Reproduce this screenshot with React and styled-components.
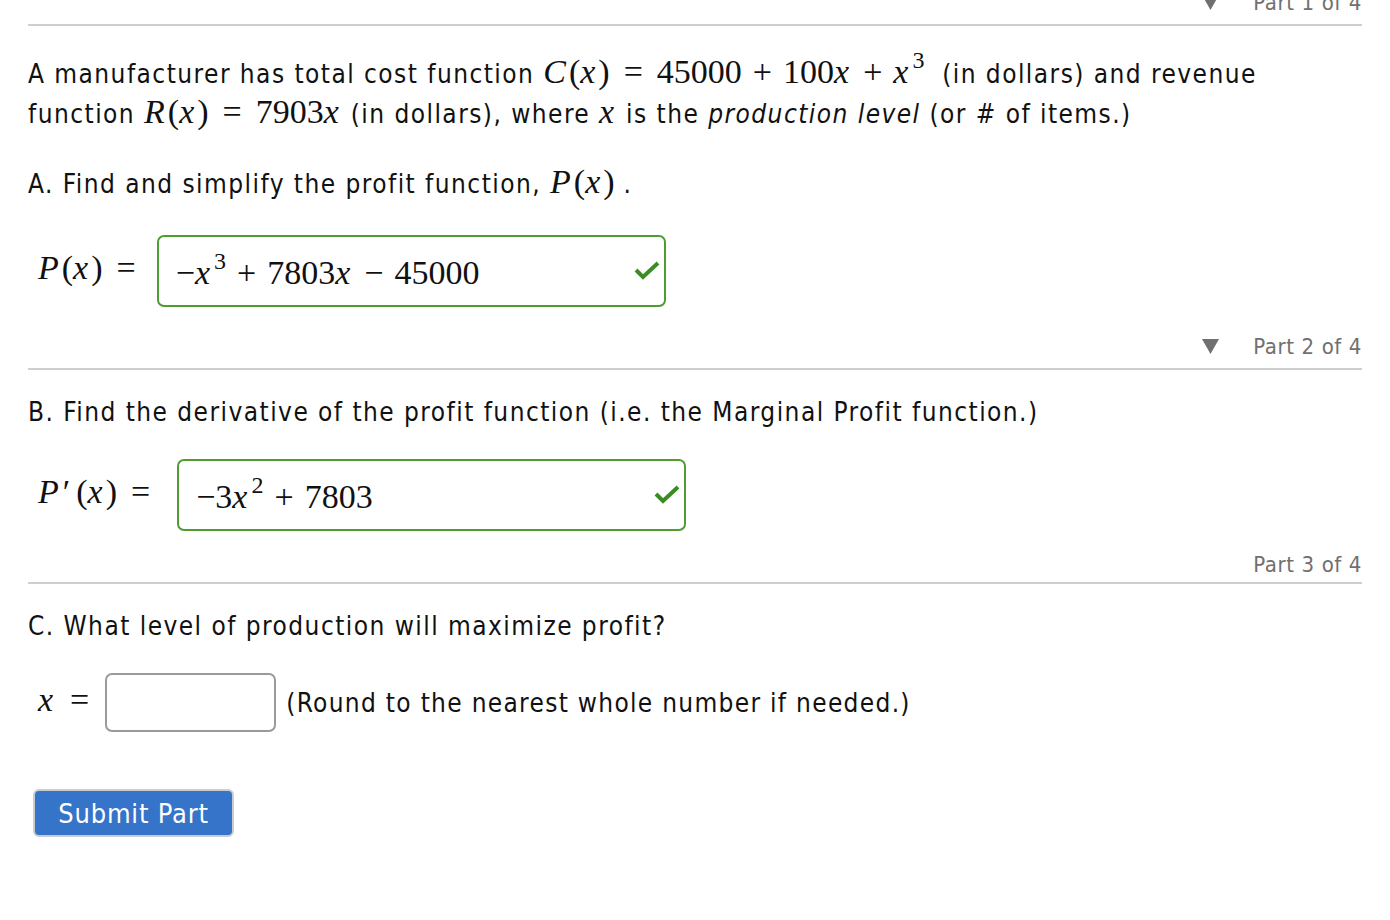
import React from "react";
import styled, { createGlobalStyle } from "styled-components";

const GlobalStyle = createGlobalStyle`
  body {
    margin: 0;
    background: #fff;
    font-family: "DejaVu Sans Condensed", "Open Sans", sans-serif;
    color: #111;
  }
`;

const Page = styled.div`
  padding: 0 28px 80px 28px;
  margin-top: -20px;
`;

const PartHeader = styled.div`
  display: flex;
  justify-content: flex-end;
  align-items: center;
  gap: 34px;
  height: ${({ $tight }) => ($tight ? "36px" : "44px")};
  margin-top: ${({ $mt }) => $mt || "0"};
  border-bottom: 2px solid #cfcfcf;
  color: #707070;
  font-size: 22px;
  letter-spacing: 0.6px;
`;

const Arrow = () => (
  <svg width="17" height="15" viewBox="0 0 17 15">
    <polygon points="0,0 17,0 8.5,15" fill="#707070" />
  </svg>
);

const Para = styled.p`
  margin: ${({ $m }) => $m || "0"};
  font-size: 26px;
  line-height: 40px;
  letter-spacing: 1.45px;
  white-space: nowrap;
`;

const M = styled.span`
  font-family: "Liberation Serif", "DejaVu Serif", serif;
  font-size: 34px;
  line-height: 0;
  letter-spacing: 0;
  font-style: ${({ $i }) => ($i ? "italic" : "normal")};
  margin-right: ${({ $i }) => ($i ? "3px" : "0")};
`;

const Prime = styled(M)`
  margin: 0 6px 0 1px;
`;

const Op = styled.span`
  font-family: "Liberation Serif", "DejaVu Serif", serif;
  font-size: 34px;
  line-height: 0;
  letter-spacing: 0;
  margin: 0 ${({ $rel }) => ($rel ? "14px" : "11px")};
`;

const Sup = styled.sup`
  font-family: "Liberation Serif", "DejaVu Serif", serif;
  font-size: 24px;
  line-height: 0;
  letter-spacing: 0;
  vertical-align: 0;
  position: relative;
  top: -15px;
  margin-left: 1px;
`;

const AnswerRow = styled.div`
  display: flex;
  align-items: center;
  padding-left: 10px;
  margin: ${({ $m }) => $m || "0"};
`;

const Label = styled.div`
  white-space: nowrap;
  line-height: 40px;
  padding-top: 6px;
  margin-right: ${({ $gap }) => $gap || "10px"};
`;

const AnswerBox = styled.div`
  display: flex;
  align-items: center;
  justify-content: space-between;
  box-sizing: border-box;
  width: ${({ $w }) => $w};
  height: ${({ $h }) => $h || "72px"};
  border: 2px solid ${({ $ok }) => ($ok ? "#4f9c2f" : "#9a9a9a")};
  border-radius: 7px;
  padding: 0 3px 0 17px;
  white-space: nowrap;
  line-height: 40px;
`;

const BoxMath = styled.span`
  padding-top: 16px;
`;

const Hint = styled.span`
  font-size: 26px;
  letter-spacing: 1.3px;
  margin-left: 10px;
  white-space: nowrap;
`;

const SubmitButton = styled.button`
  margin: 57px 0 0 5px;
  width: 201px;
  height: 48px;
  box-sizing: border-box;
  border: 2px solid #c9ccd2;
  border-radius: 6px;
  background: #3574c9;
  color: #fff;
  font-family: "DejaVu Sans Condensed", "Open Sans", sans-serif;
  font-size: 27px;
  letter-spacing: 0.8px;
  padding: 0;
  cursor: pointer;
`;

const Check = () => (
  <svg width="28" height="22" viewBox="0 0 28 22">
    <polyline
      points="3,10 10,17 25,3"
      fill="none"
      stroke="#3c8c26"
      strokeWidth="4"
    />
  </svg>
);

const Px = ({ prime }) => (
  <>
    <M $i>P</M>
    {prime && <Prime>′</Prime>}
    <M>(</M>
    <M $i>x</M>
    <M>)</M>
  </>
);

export default function App() {
  return (
    <>
      <GlobalStyle />
      <Page>
        <PartHeader>
          <Arrow />
          <span>Part 1 of 4</span>
        </PartHeader>
        <Para $m="28px 0 0 0">
          A manufacturer has total cost function <M $i>C</M>
          <M>(</M>
          <M $i>x</M>
          <M>)</M>
          <Op $rel>=</Op>
          <M>45000</M>
          <Op>+</Op>
          <M>100</M>
          <M $i>x</M>
          <Op>+</Op>
          <M $i>x</M>
          <Sup>3</Sup>&nbsp; (in dollars) and revenue
          <br />
          function <M $i>R</M>
          <M>(</M>
          <M $i>x</M>
          <M>)</M>
          <Op $rel>=</Op>
          <M>7903</M>
          <M $i>x</M> (in dollars), where <M $i>x</M> is the{" "}
          <i>production level</i> (or # of items.)
        </Para>
        <Para $m="30px 0 0 0">
          A. Find and simplify the profit function, <Px /> .
        </Para>
        <AnswerRow $m="31px 0 0 0">
          <Label $gap="7px">
            <Px />
            <Op $rel>=</Op>
          </Label>
          <AnswerBox $w="509px" $ok>
            <BoxMath>
              <M>−</M>
              <M $i>x</M>
              <Sup>3</Sup>
              <Op>+</Op>
              <M>7803</M>
              <M $i>x</M>
              <Op>−</Op>
              <M>45000</M>
            </BoxMath>
            <Check />
          </AnswerBox>
        </AnswerRow>

        <PartHeader $mt="17px">
          <Arrow />
          <span>Part 2 of 4</span>
        </PartHeader>
        <Para $m="22px 0 0 0">
          B. Find the derivative of the profit function (i.e. the Marginal
          Profit function.)
        </Para>
        <AnswerRow $m="27px 0 0 0">
          <Label $gap="13px">
            <Px prime />
            <Op $rel>=</Op>
          </Label>
          <AnswerBox $w="509px" $ok>
            <BoxMath>
              <M>−3</M>
              <M $i>x</M>
              <Sup>2</Sup>
              <Op>+</Op>
              <M>7803</M>
            </BoxMath>
            <Check />
          </AnswerBox>
        </AnswerRow>

        <PartHeader $tight $mt="15px">
          <span>Part 3 of 4</span>
        </PartHeader>
        <Para $m="22px 0 0 0">C. What level of production will maximize profit?</Para>
        <AnswerRow $m="27px 0 0 0">
          <Label $gap="2px">
            <M $i>x</M>
            <Op $rel>=</Op>
          </Label>
          <AnswerBox $w="171px" $h="59px" />
          <Hint>(Round to the nearest whole number if needed.)</Hint>
        </AnswerRow>
        <SubmitButton>Submit Part</SubmitButton>
      </Page>
    </>
  );
}
